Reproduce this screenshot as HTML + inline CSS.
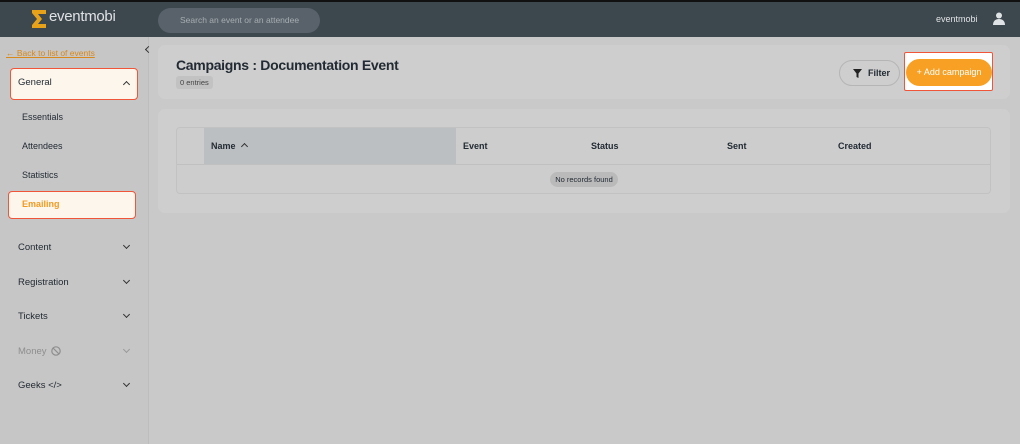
<!DOCTYPE html>
<html><head><meta charset="utf-8"><style>
*{box-sizing:border-box;margin:0;padding:0}
body{width:1020px;height:444px;overflow:hidden;background:#c9c9c9;font-family:"Liberation Sans",sans-serif;position:relative;color:#222b33}
.top{position:absolute;left:0;top:0;width:1020px;height:37px;background:#3d474e;border-top:2px solid #111}
.search{position:absolute;left:158px;top:6px;width:162px;height:25px;border-radius:13px;background:#59626a;color:#a7adb2;font-size:8.5px;line-height:25px;padding-left:22px}
.side{position:absolute;left:0;top:37px;width:148px;height:407px;background:#c6c6c6}
.ab{position:absolute;font-size:9.5px}
.card{position:absolute;background:#cecece;border-radius:7px}
.chev{position:absolute;width:5px;height:5px;border-right:1.3px solid #333;border-bottom:1.3px solid #333}
</style></head><body>
<div class="top">
 <svg style="position:absolute;left:31px;top:7px" width="16" height="20" viewBox="0 0 16 20"><path d="M1 1h14v4H7l4 5-4 5h8v4H1v-3l5-6-5-6z" fill="#e8a21a"/></svg>
 <div style="position:absolute;left:49px;top:6px;color:#dfe2e4;font-size:15px;letter-spacing:-0.3px">eventmobi</div>
 <div class="search">Search an event or an attendee</div>
 <div style="position:absolute;left:936px;top:12px;color:#e0e3e5;font-size:9px">eventmobi</div>
 <svg style="position:absolute;left:993px;top:10px" width="12" height="13" viewBox="0 0 12 13"><circle cx="6" cy="3.5" r="3" fill="#e0e3e5"/><path d="M0 13c0-4 2.5-6 6-6s6 2 6 6z" fill="#e0e3e5"/></svg>
</div>
<div class="side">
 <div class="ab" style="left:6px;top:11px;color:#d9891a;font-size:8.5px;text-decoration:underline">← Back to list of events</div>
 <div style="position:absolute;left:10px;top:31px;width:128px;height:32px;background:#fdf6ec;border:1.5px solid #f0553a;border-radius:4px"></div>
 <div class="ab" style="left:18px;top:40px">General</div>
 <div class="chev" style="left:124px;top:45px;transform:rotate(-135deg)"></div>
 <div class="ab" style="left:22px;top:75px;font-size:9px">Essentials</div>
 <div class="ab" style="left:22px;top:104px;font-size:9px">Attendees</div>
 <div class="ab" style="left:22px;top:133px;font-size:9px">Statistics</div>
 <div style="position:absolute;left:8px;top:154px;width:128px;height:28px;background:#fdf6ec;border:1.5px solid #f0553a;border-radius:4px"></div>
 <div class="ab" style="left:22px;top:162px;font-size:9px;color:#f29a1f;font-weight:bold">Emailing</div>
 <div class="ab" style="left:18px;top:205px">Content</div><div class="chev" style="left:124px;top:206px;transform:rotate(45deg)"></div>
 <div class="ab" style="left:18px;top:240px">Registration</div><div class="chev" style="left:124px;top:241px;transform:rotate(45deg)"></div>
 <div class="ab" style="left:18px;top:274px">Tickets</div><div class="chev" style="left:124px;top:275px;transform:rotate(45deg)"></div>
 <div class="ab" style="left:18px;top:309px;color:#8e8e8e">Money</div>
 <svg style="position:absolute;left:51px;top:309px" width="10" height="10" viewBox="0 0 10 10"><circle cx="5" cy="5" r="4.2" fill="none" stroke="#8e8e8e" stroke-width="1.2"/><path d="M2 2l6 6" stroke="#8e8e8e" stroke-width="1.2"/></svg>
 <div class="chev" style="left:124px;top:310px;transform:rotate(45deg);border-color:#999"></div>
 <div class="ab" style="left:18px;top:343px">Geeks &lt;/&gt;</div><div class="chev" style="left:124px;top:344px;transform:rotate(45deg)"></div>
</div>
<div style="position:absolute;left:148px;top:37px;width:1px;height:407px;background:#bdbdbd"></div>
<div class="chev" style="left:146px;top:47px;transform:rotate(135deg)"></div>
<div class="card" style="left:158px;top:45px;width:852px;height:54px"></div>
<div class="ab" style="left:176px;top:57px;font-size:14px;font-weight:bold;letter-spacing:-0.3px">Campaigns : Documentation Event</div>
<div class="ab" style="left:176px;top:76px;font-size:7.5px;background:#c2c2c2;padding:2px 4px;border-radius:3px;color:#444">0 entries</div>
<div style="position:absolute;left:839px;top:60px;width:61px;height:26px;border:1px solid #b5b5b5;border-radius:13px;font-size:9px;font-weight:bold;line-height:24px;padding-left:28px">Filter</div>
<svg style="position:absolute;left:853px;top:69px" width="9" height="9" viewBox="0 0 9 9"><path d="M0 0h9L5.5 4.5V9L3.5 8V4.5z" fill="#222"/></svg>
<div style="position:absolute;left:904px;top:52px;width:89px;height:39px;border:1.5px solid #f0553a;background:#fff;border-radius:2px"></div>
<div style="position:absolute;left:906px;top:59px;width:86px;height:27px;background:#f7a023;border-radius:14px;color:#fff;font-size:9px;line-height:27px;text-align:center">+ Add campaign</div>
<div class="card" style="left:158px;top:109px;width:852px;height:104px"></div>
<div style="position:absolute;left:176px;top:127px;width:815px;height:67px;border:1px solid #c2c2c2;border-radius:4px;background:#cdcdcd"></div>
<div style="position:absolute;left:204px;top:128px;width:252px;height:36px;background:#bcbfc2"></div>
<div style="position:absolute;left:177px;top:164px;width:813px;height:1px;background:#c0c0c0"></div>
<div class="ab" style="left:211px;top:141px;font-weight:bold;font-size:9px">Name</div>
<div class="chev" style="left:242px;top:144px;transform:rotate(-135deg)"></div>
<div class="ab" style="left:463px;top:141px;font-weight:bold;font-size:9px">Event</div>
<div class="ab" style="left:591px;top:141px;font-weight:bold;font-size:9px">Status</div>
<div class="ab" style="left:727px;top:141px;font-weight:bold;font-size:9px">Sent</div>
<div class="ab" style="left:838px;top:141px;font-weight:bold;font-size:9px">Created</div>
<div class="ab" style="left:550px;top:172px;width:68px;height:15px;background:#bababa;border-radius:8px;font-size:7.5px;line-height:15px;text-align:center">No records found</div>
</body></html>
